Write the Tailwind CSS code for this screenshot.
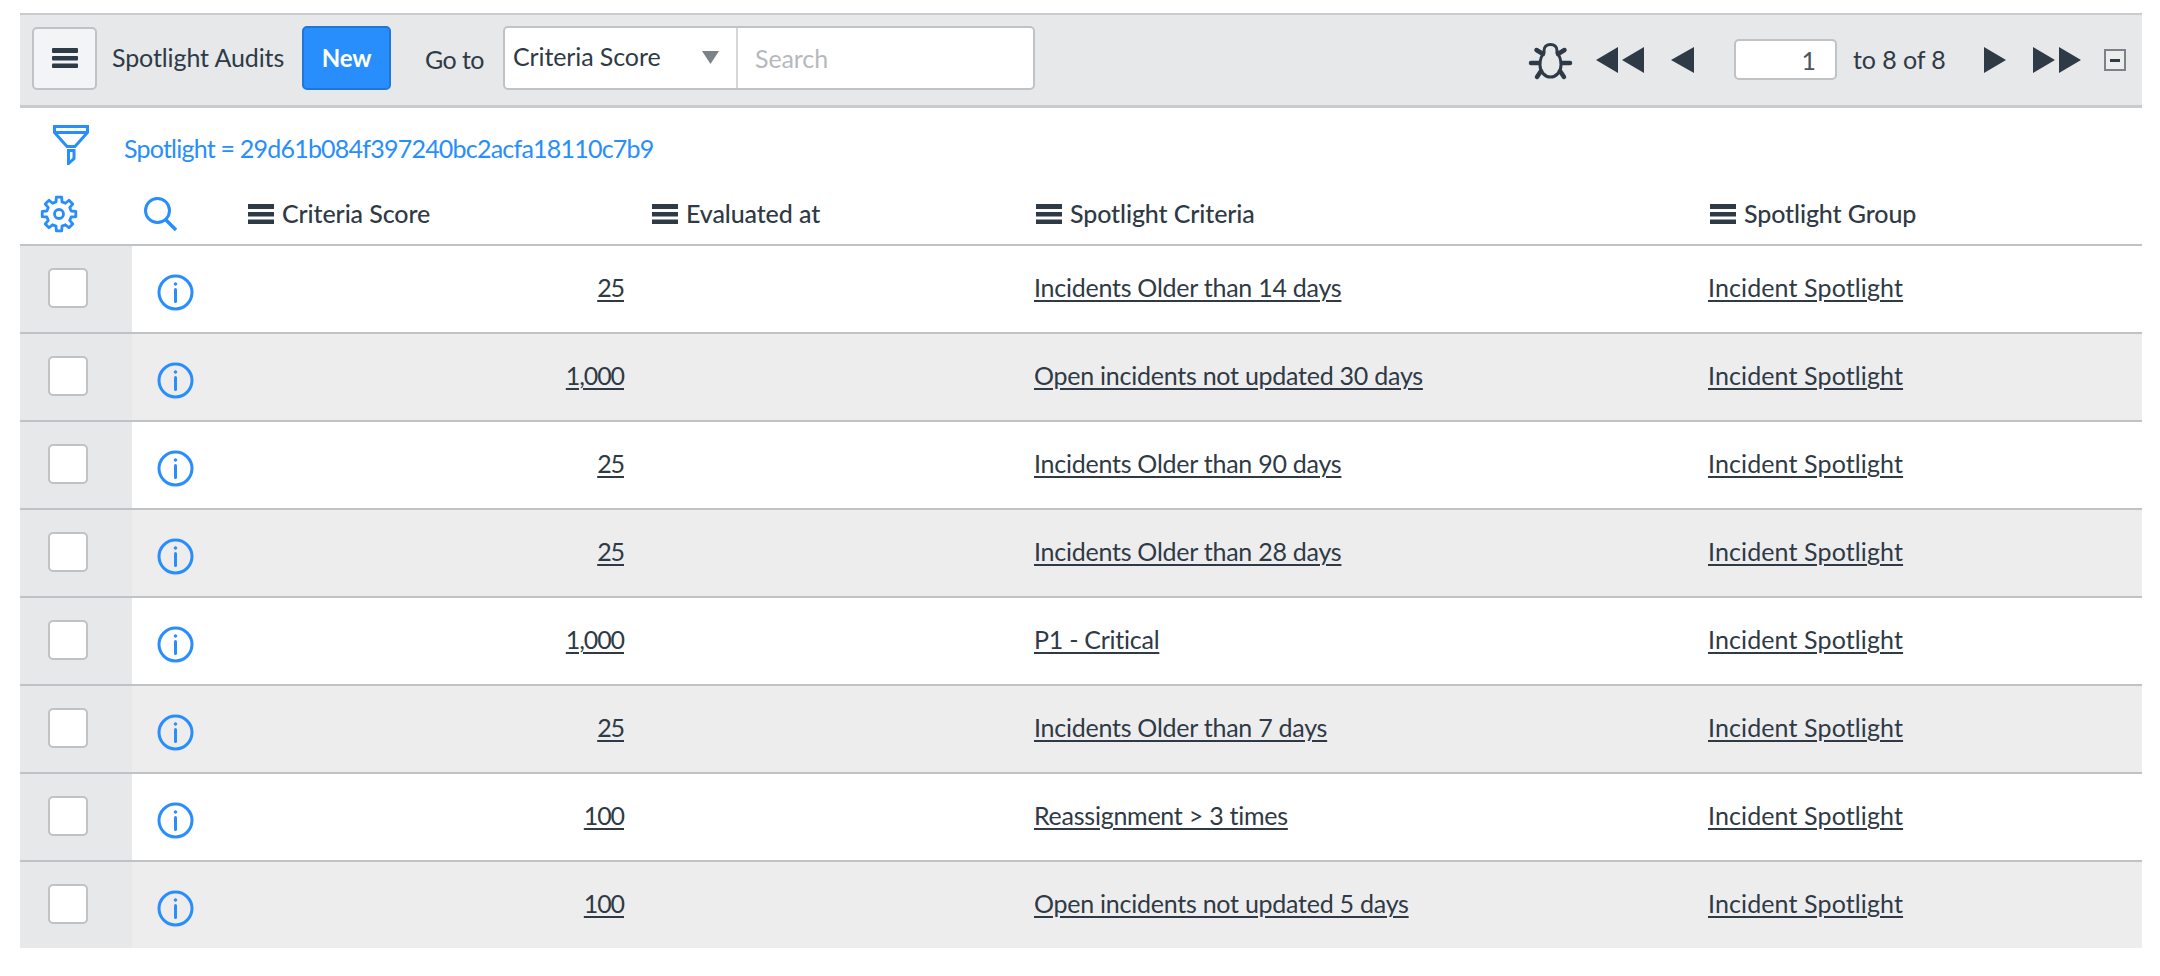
<!DOCTYPE html>
<html lang="en">
<head>
    <meta charset="UTF-8">
    <title>Spotlight Audits</title>
    <script src="https://cdn.jsdelivr.net/npm/@tailwindcss/browser@4"></script>
</head>
<body class="bg-white font-['Lato',sans-serif] text-[25px] text-[#2e3a45] tracking-[-0.1px]">
    <div class="pt-[13px] pl-[20px] pr-[18px]">
        <!-- toolbar -->
        <div class="h-[95px] flex items-center bg-[#e6e8ea] border-t-2 border-b-[3px] border-[#c9cbce] pl-[12px] pr-[16px] pb-[4px]">
            <button class="w-[65px] h-[63px] flex items-center justify-center bg-[#f3f4f5] border-2 border-[#c0c3c6] rounded-[5px]">
                <svg width="26" height="20" viewBox="0 0 26 20" fill="#2e3a45"><rect width="26" height="5" rx="1"/><rect y="8" width="26" height="4.500" rx="1"/><rect y="15.500" width="26" height="4.500" rx="1"/></svg>
            </button>
            <span class="ml-[15px] w-[190px]">Spotlight Audits</span>
            <button class="w-[89px] h-[64px] bg-[#278efc] border-2 border-[#1f78d8] rounded-[5px] text-white font-bold text-[24px]">New</button>
            <span class="ml-[34px] w-[78px] mt-[3px] tracking-[-0.6px]">Go to</span>
            <div class="w-[532px] h-[64px] flex bg-white border-2 border-[#c0c3c6] rounded-[5px]">
                <div class="w-[233px] relative flex items-center pl-[8px] border-r-2 border-[#d5d7d9]">
                    <span class="-mt-[2px]">Criteria Score</span>
                    <svg class="absolute left-[197px] top-[23px]" width="17" height="13" viewBox="0 0 17 13" fill="#7c8287"><path d="M0 0h17L8.500 13z"/></svg>
                </div>
                <div class="flex-1 flex items-center pl-[17px] pt-[2px] text-[#b6b9bc]">Search</div>
            </div>
            <div class="ml-auto flex items-center mt-[3px]">
                <svg class="mt-[3px]" width="50" height="46" viewBox="0 0 50 46" fill="none" stroke="#2e3a45" stroke-linecap="round"><path stroke-width="3" d="M25.500 6.500c-4 0-6.500 2.500-6.500 6 0 1 .2 1.500 0 2.200C16 18 15 23 15 27c0 7 5 12 10.500 12S36 34 36 27c0-4-1-9-4-12.300-.2-.7 0-1.200 0-2.200 0-3.500-2.500-6-6.500-6z"/><path stroke-width="4.500" d="M18 16l-6.500-4M14 25H6M16 33l-4 6M33 16l6.500-4M37 25h8M35 33l4 6"/></svg>
                <svg class="ml-[21px]" width="48" height="26" viewBox="0 0 48 26" fill="#2e3a45"><path d="M22 0v26L0 13zM48 0v26L26 13z"/></svg>
                <svg class="ml-[27px]" width="23" height="26" viewBox="0 0 23 26" fill="#2e3a45"><path d="M23 0v26L0 13z"/></svg>
                <input value="1" class="ml-[40px] w-[103px] h-[41px] bg-white border-2 border-[#c0c3c6] rounded-[5px] text-right pr-[19px] text-[#4a5560]">
                <span class="ml-[16px] w-[131px]">to 8 of 8</span>
                <svg width="22" height="26" viewBox="0 0 22 26" fill="#2e3a45"><path d="M0 0v26l22-13z"/></svg>
                <svg class="ml-[27px]" width="48" height="26" viewBox="0 0 48 26" fill="#2e3a45"><path d="M0 0v26l22-13zM26 0v26l22-13z"/></svg>
                <div class="ml-[23px] mt-[1px] w-[22px] h-[22px] flex items-center justify-center border-2 border-[#7c8287] bg-[#eceded]"><div class="w-[10px] h-[3px] bg-[#2e3a45]"></div></div>
            </div>
        </div>

        <!-- filter -->
        <div class="h-[70px] flex items-center">
            <svg class="ml-[33px] mt-[3px]" width="36" height="40" viewBox="0 0 36 40" fill="none" stroke="#278efc" stroke-width="3"><path d="M1.500 1.500h33v6L22 21.500h-8L1.500 7.500zM1.500 7.500h33"/><path d="M15.500 25.500H21v8l-5.500 5z"/></svg>
            <a href="#" class="ml-[35px] mt-[11px] text-[#278efc] tracking-[-0.78px]">Spotlight = 29d61b084f397240bc2acfa18110c7b9</a>
        </div>

        <table class="w-full table-fixed border-collapse">
            <colgroup>
                <col class="w-[112px]"><col class="w-[112px]"><col class="w-[404px]"><col class="w-[384px]"><col class="w-[674px]"><col>
            </colgroup>
            <thead>
                <tr class="h-[67px] border-b-2 border-[#c0c3c6] font-medium text-left">
                    <th class="pl-[20px] pt-[6px] font-medium"><svg width="38" height="38" viewBox="-19 -19 38 38" fill="none" stroke="#278efc" stroke-width="2.800" stroke-linejoin="round"><path d="M-2.660-16.790H2.660L3.020-12.130 6.440-10.710 9.990-13.750 13.750-9.990 10.710-6.440 12.130-3.020 16.790-2.660V2.660L12.130 3.020 10.710 6.440 13.750 9.990 9.990 13.750 6.440 10.710 3.020 12.130 2.660 16.790H-2.660L-3.020 12.130-6.440 10.710-9.990 13.750-13.750 9.990-10.710 6.440-12.130 3.020-16.790 2.660V-2.660L-12.130-3.020-10.710-6.440-13.750-9.990-9.990-13.750-6.440-10.710-3.020-12.130z"/><circle r="4.500"/></svg></th>
                    <th class="pl-[12px] pt-[6px] font-medium"><svg width="34" height="34" viewBox="0 0 34 34" fill="none" stroke="#278efc" stroke-width="3"><circle cx="13.500" cy="13.500" r="12"/><path d="M22 23l10 10" stroke-width="3.500"/></svg></th>
                    <th class="pl-[4px] pt-[6px] font-medium"><span class="flex items-center gap-[8px]"><svg width="26" height="20" viewBox="0 0 26 20" fill="#2e3a45"><path d="M0 0h26v5H0zM0 8h26v4.500H0zM0 15.500h26V20H0z"/></svg>Criteria Score</span></th>
                    <th class="pl-[4px] pt-[6px] font-medium"><span class="flex items-center gap-[8px]"><svg width="26" height="20" viewBox="0 0 26 20" fill="#2e3a45"><path d="M0 0h26v5H0zM0 8h26v4.500H0zM0 15.500h26V20H0z"/></svg>Evaluated at</span></th>
                    <th class="pl-[4px] pt-[6px] font-medium"><span class="flex items-center gap-[8px]"><svg width="26" height="20" viewBox="0 0 26 20" fill="#2e3a45"><path d="M0 0h26v5H0zM0 8h26v4.500H0zM0 15.500h26V20H0z"/></svg>Spotlight Criteria</span></th>
                    <th class="pl-[4px] pt-[6px] font-medium"><span class="flex items-center gap-[8px]"><svg width="26" height="20" viewBox="0 0 26 20" fill="#2e3a45"><path d="M0 0h26v5H0zM0 8h26v4.500H0zM0 15.500h26V20H0z"/></svg>Spotlight Group</span></th>
                </tr>
            </thead>
            <tbody id="rows"></tbody>
        </table>
    </div>

    <script>
        const audits = [
            ['25', 'Incidents Older than 14 days'],
            ['1,000', 'Open incidents not updated 30 days'],
            ['25', 'Incidents Older than 90 days'],
            ['25', 'Incidents Older than 28 days'],
            ['1,000', 'P1 - Critical'],
            ['25', 'Incidents Older than 7 days'],
            ['100', 'Reassignment > 3 times'],
            ['100', 'Open incidents not updated 5 days'],
        ];
        const linkCls = 'underline decoration-2 underline-offset-[3px]';
        const tbody = document.getElementById('rows');
        audits.forEach(([score, criteria], i) => {
            const tr = document.createElement('tr');
            // last row has no line under it, odd rows are shaded
            tr.className = (i % 2 ? 'bg-[#ededee] ' : 'bg-white ') + (i < audits.length - 1 ? 'h-[88px] border-b-2 border-[#c0c3c6]' : 'h-[87px]');
            tr.innerHTML = `
                <td class="bg-[#e6e8ea] pl-[28px]"><span class="block w-[40px] h-[40px] -mt-[3px] bg-white border-2 border-[#c0c3c6] rounded-[5px]"></span></td>
                <td class="pl-[25px]"><svg class="mt-[6px]" width="37" height="37" viewBox="0 0 37 37" fill="none" stroke="#278efc" stroke-width="3"><circle cx="18.500" cy="18.500" r="16.500"/><path d="M18.500 15.500v12" stroke-linecap="round"/><circle cx="18.500" cy="10" r="1.300" fill="#278efc" stroke-width="1"/></svg></td>
                <td class="text-right pr-[24px] pb-[3px] tracking-[-1.1px]"><a href="#" class="${linkCls}">${score}</a></td>
                <td></td>
                <td class="pl-[2px] pb-[3px] tracking-[-0.25px]"><a href="#" class="${linkCls}">${criteria.replace('>', '&gt;')}</a></td>
                <td class="pl-[2px] pb-[3px] tracking-[0.12px]"><a href="#" class="${linkCls}">Incident Spotlight</a></td>`;
            tbody.appendChild(tr);
        });
    </script>
</body>
</html>
